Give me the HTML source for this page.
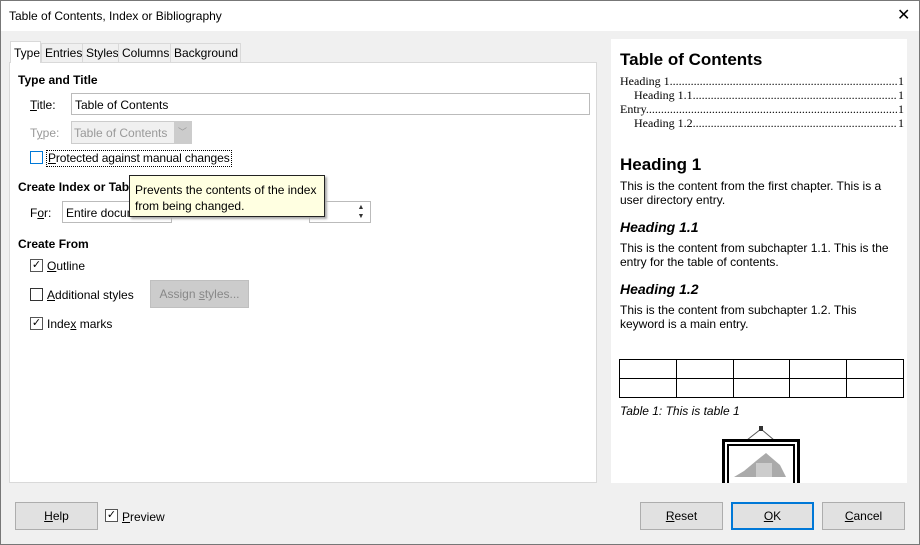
<!DOCTYPE html>
<html><head><style>
*{margin:0;padding:0;box-sizing:border-box}
body{width:920px;height:545px;overflow:hidden;background:#f0f0f0;font-family:"Liberation Sans",sans-serif;font-size:12px;color:#000;position:relative}
.a{position:absolute;white-space:nowrap}
.cb{position:absolute;width:13px;height:13px;border:1px solid #333;background:#fff}
.btn{position:absolute;border:1px solid #adadad;background:#e1e1e1;text-align:center;line-height:26px;font-size:12px}
u{text-decoration:underline}
.toc{position:absolute;left:620px;width:284px;font-family:"Liberation Serif",serif;font-size:12px;overflow:hidden;height:14px;line-height:14px;white-space:nowrap}
.toc .d{position:absolute;right:7px;top:0;left:0;overflow:hidden;white-space:nowrap}
.toc .n{position:absolute;right:0;top:0;background:#fff}
.p{font-family:"Liberation Sans",sans-serif;font-size:12px;position:absolute;left:620px;width:280px;line-height:14px}
</style></head><body>
<div class="a" style="left:0;top:0;width:920px;height:31px;background:#fff;border:1px solid #777;border-bottom:none"></div>
<div class="a" style="left:9px;top:9px;font-size:12px">Table of Contents, Index or Bibliography</div>
<div class="a" style="left:897px;top:5px;font-size:16px;font-weight:300">✕</div>
<div class="a" style="left:0;top:31px;width:1px;height:514px;background:#777"></div>
<div class="a" style="left:919px;top:31px;width:1px;height:514px;background:#777"></div>
<div class="a" style="left:0;top:544px;width:920px;height:1px;background:#777"></div>

<div class="a" style="left:9px;top:62px;width:588px;height:421px;background:#fff;border:1px solid #d9d9d9"></div>
<div class="a" style="left:10px;top:41px;width:31px;height:22px;background:#fff;border:1px solid #d9d9d9;border-bottom:none;padding:4px 0 0 3px;font-size:12px">Type</div>
<div class="a" style="left:41px;top:43px;width:42px;height:20px;background:#f0f0f0;border:1px solid #d9d9d9;padding:2px 0 0 3px">Entries</div>
<div class="a" style="left:82px;top:43px;width:37px;height:20px;background:#f0f0f0;border:1px solid #d9d9d9;padding:2px 0 0 3px">Styles</div>
<div class="a" style="left:118px;top:43px;width:53px;height:20px;background:#f0f0f0;border:1px solid #d9d9d9;padding:2px 0 0 3px">Columns</div>
<div class="a" style="left:170px;top:43px;width:71px;height:20px;background:#f0f0f0;border:1px solid #d9d9d9;padding:2px 0 0 3px">Background</div>

<div class="a" style="left:18px;top:73px;font-weight:bold">Type and Title</div>
<div class="a" style="left:30px;top:98px"><u>T</u>itle:</div>
<div class="a" style="left:71px;top:93px;width:519px;height:22px;border:1px solid #bbb;padding:4px 0 0 3px;background:#fff">Table of Contents</div>
<div class="a" style="left:30px;top:126px;color:#999">T<u>y</u>pe:</div>
<div class="a" style="left:71px;top:121px;width:121px;height:23px;border:1px solid #ccc;background:#f0f0f0;padding:4px 0 0 2px;color:#999">Table of Contents</div>
<div class="a" style="left:174px;top:122px;width:17px;height:21px;background:#ccc;color:#999;text-align:center;font-size:9px;line-height:20px">﹀</div>
<div class="cb" style="left:30px;top:151px;border-color:#0078d7"></div>
<div class="a" style="left:46px;top:150px;border:1px dotted #000;padding:0 1px;line-height:15px;letter-spacing:-0.1px"><u>P</u>rotected against manual changes</div>

<div class="a" style="left:18px;top:180px;font-weight:bold">Create Index or Table</div>
<div class="a" style="left:30px;top:206px">F<u>o</u>r:</div>
<div class="a" style="left:62px;top:201px;width:110px;height:22px;border:1px solid #bbb;background:#fff;padding:4px 0 0 3px">Entire docum</div>
<div class="a" style="left:309px;top:201px;width:62px;height:22px;border:1px solid #bbb;background:#fff"></div>
<div class="a" style="left:353px;top:203px;width:16px;height:18px;font-size:7px;line-height:9px;text-align:center;color:#333">▲<br>▼</div>
<div class="a" style="left:129px;top:175px;width:196px;height:42px;background:#ffffe1;border:1px solid #222;box-shadow:2px 2px 2px #aaa;padding:6px 0 0 5px;line-height:16px;font-size:12px">Prevents the contents of the index<br>from being changed.</div>

<div class="a" style="left:18px;top:237px;font-weight:bold">Create From</div>
<div class="cb" style="left:30px;top:259px;border-color:#555;font-size:11px;line-height:11px;text-align:center">✓</div>
<div class="a" style="left:47px;top:259px"><u>O</u>utline</div>
<div class="cb" style="left:30px;top:288px"></div>
<div class="a" style="left:47px;top:288px"><u>A</u>dditional styles</div>
<div class="btn" style="left:150px;top:280px;width:99px;height:28px;background:#ccc;border-color:#bfbfbf;color:#888">Assign <u>s</u>tyles...</div>
<div class="cb" style="left:30px;top:317px;border-color:#555;font-size:11px;line-height:11px;text-align:center">✓</div>
<div class="a" style="left:47px;top:317px">Inde<u>x</u> marks</div>

<div class="a" style="left:611px;top:39px;width:296px;height:444px;background:#fff"></div>
<div class="a" style="left:620px;top:50px;font-size:17px;font-weight:bold">Table of Contents</div>
<div class="toc" style="top:74px"><span class="d">Heading 1.................................................................................................................</span><span class="n">1</span></div>
<div class="toc" style="top:88px"><span class="d" style="left:14px">Heading 1.1.................................................................................................................</span><span class="n">1</span></div>
<div class="toc" style="top:102px"><span class="d">Entry.................................................................................................................</span><span class="n">1</span></div>
<div class="toc" style="top:116px"><span class="d" style="left:14px">Heading 1.2.................................................................................................................</span><span class="n">1</span></div>
<div class="a" style="left:620px;top:155px;font-size:17px;font-weight:bold">Heading 1</div>
<div class="p" style="top:179px">This is the content from the first chapter. This is a user directory entry.</div>
<div class="a" style="left:620px;top:219px;font-size:14px;font-weight:bold;font-style:italic">Heading 1.1</div>
<div class="p" style="top:241px">This is the content from subchapter 1.1. This is the entry for the table of contents.</div>
<div class="a" style="left:620px;top:281px;font-size:14px;font-weight:bold;font-style:italic">Heading 1.2</div>
<div class="p" style="top:303px">This is the content from subchapter 1.2. This keyword is a main entry.</div>
<table class="a" style="left:619px;top:359px;width:285px;height:39px;border-collapse:collapse">
<tr><td style="border:1px solid #000"></td><td style="border:1px solid #000"></td><td style="border:1px solid #000"></td><td style="border:1px solid #000"></td><td style="border:1px solid #000"></td></tr>
<tr><td style="border:1px solid #000"></td><td style="border:1px solid #000"></td><td style="border:1px solid #000"></td><td style="border:1px solid #000"></td><td style="border:1px solid #000"></td></tr>
</table>
<div class="a" style="left:620px;top:404px;font-style:italic">Table 1: This is table 1</div>
<svg class="a" style="left:720px;top:425px" width="82" height="58">
<path d="M27 15 L41 4 L54 15" stroke="#555" fill="none"/><rect x="39" y="1" width="4" height="5" fill="#333"/>
<rect x="3.5" y="15.5" width="75" height="45" fill="#fff" stroke="#000" stroke-width="3"/>
<rect x="8" y="20" width="66" height="40" fill="#fff" stroke="#000" stroke-width="2"/>
<path d="M14 52 L24 46 L36 36 L46 28 L60 40 L66 52 Z" fill="#aaa"/>
<rect x="36" y="38" width="16" height="14" fill="#ccc"/>
</svg>

<div class="btn" style="left:15px;top:502px;width:83px;height:28px"><u>H</u>elp</div>
<div class="cb" style="left:105px;top:509px;border-color:#555;font-size:11px;line-height:11px;text-align:center">✓</div>
<div class="a" style="left:122px;top:510px"><u>P</u>review</div>
<div class="btn" style="left:640px;top:502px;width:83px;height:28px"><u>R</u>eset</div>
<div class="btn" style="left:731px;top:502px;width:83px;height:28px;border:2px solid #0078d7;line-height:24px"><u>O</u>K</div>
<div class="btn" style="left:822px;top:502px;width:83px;height:28px"><u>C</u>ancel</div>
</body></html>
